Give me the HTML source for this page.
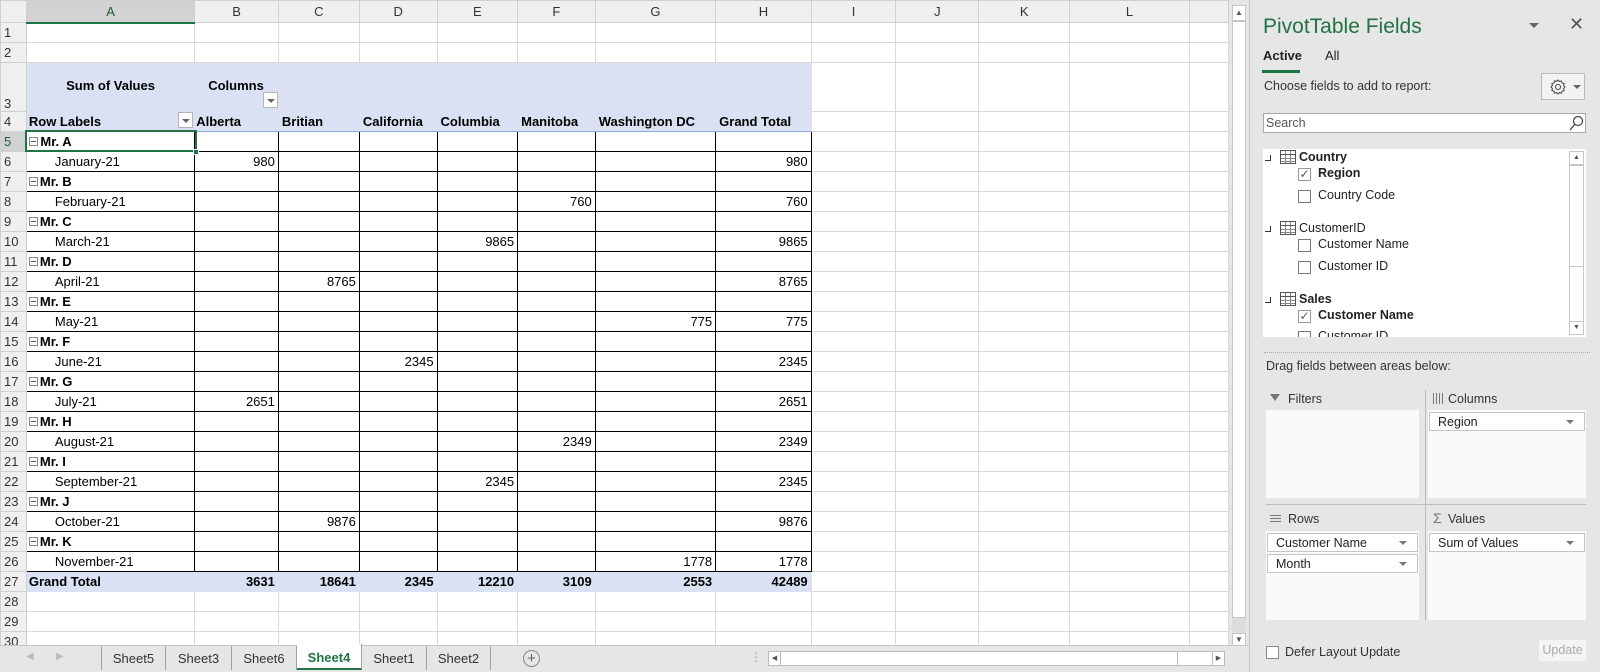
<!DOCTYPE html>
<html><head><meta charset="utf-8">
<style>
*{box-sizing:border-box;margin:0;padding:0}
body{width:1600px;height:672px;overflow:hidden;background:#e6e6e6;font-family:"Liberation Sans",sans-serif;font-size:13px;color:#000;position:relative}
#grid{position:absolute;left:0;top:0;width:1229px;height:645px;overflow:hidden;background:#fff}
table{border-collapse:collapse;table-layout:fixed;position:absolute;left:0;top:0}
td,th{height:20px;border:1px solid #d9d9d9;padding:0 3px;white-space:nowrap;overflow:hidden;font-weight:normal}
th{background:#efefef;color:#333;border-color:#cfcfcf;font-size:13px}
tr.hd th{height:22px;text-align:center;font-size:13px}
th.rn{text-align:left;padding-left:3px}
th.sel{background:#d2d2d2;border-bottom:2px solid #217346;color:#1e5e38}
th.selr{background:#d2d2d2;border-right:2px solid #217346;color:#1e5e38}
.bl{background:#d9e1f2;border-color:#d9e1f2}
.b{font-weight:bold}
.r4 td.bl{border-bottom:1px solid #8ea9db}
td.p{border:1px solid #000}
.gt td{background:#d9e1f2;border-color:#d9e1f2;border-top:1px solid #8ea9db;font-weight:bold;text-align:right}
.n{text-align:right}
.ind{padding-left:28px}
.m{display:inline-block;width:9px;height:9px;border:1px solid #8a8a8a;position:relative;margin:0 2px 0 0;vertical-align:0}
.m:after{content:"";position:absolute;left:1px;right:1px;top:3px;height:1px;background:#555}
.dd{position:absolute;width:15px;height:16px;border:1px solid #b5b5b5;background:#fff}
.dd:after{content:"";position:absolute;left:3px;top:6px;border:4px solid transparent;border-top:4px solid #666}
.abs{position:absolute}
.panel{position:absolute;left:1249px;top:0;width:351px;height:672px;background:#e6e6e6;border-left:1px solid #c8c8c8}
.cb{position:absolute;width:13px;height:13px;border:1px solid #777;background:#fff}
.fld{position:absolute;background:#fff;border:1px solid #c6c6c6;height:19px;font-size:12.5px;padding:2px 0 0 8px;color:#222}
.fld:after{content:"";position:absolute;right:10px;top:7px;border:4px solid transparent;border-top:4px solid #777}
.box{position:absolute;background:#fafafa}
.tab{position:absolute;top:646px;height:24px;font-size:13px;color:#333;text-align:center;padding-top:5px;border-right:1px solid #a0a0a0}
.ti{position:absolute;width:16px;height:14px;border:1px solid #555;background:
linear-gradient(#555,#555) 0 3px/100% 1px no-repeat,linear-gradient(#888,#888) 0 7px/100% 1px no-repeat,linear-gradient(#888,#888) 0 10px/100% 1px no-repeat,linear-gradient(#888,#888) 4px 0/1px 100% no-repeat,linear-gradient(#888,#888) 9px 0/1px 100% no-repeat,#fff}
.cn{position:absolute;width:6px;height:6px;border-right:1px solid #333;border-bottom:1px solid #333}
.pl{position:absolute;font-size:12.5px;color:#222}
.ck{position:absolute;color:#555;font-size:12px;line-height:13px;width:13px;text-align:center}
</style></head><body>
<div id="grid">
<table>
<colgroup><col style="width:26px"><col style="width:170px"><col style="width:84px"><col style="width:82px"><col style="width:78px"><col style="width:81px"><col style="width:78px"><col style="width:121px"><col style="width:96px"><col style="width:87px"><col style="width:85px"><col style="width:93px"><col style="width:123px"><col style="width:40px"></colgroup>
<tr class="hd"><th style="background:#efefef"></th><th class="sel">A</th><th>B</th><th>C</th><th>D</th><th>E</th><th>F</th><th>G</th><th>H</th><th>I</th><th>J</th><th>K</th><th>L</th><th></th></tr>
<tr><th class="rn">1</th><td></td><td></td><td></td><td></td><td></td><td></td><td></td><td></td><td></td><td></td><td></td><td></td><td></td></tr>
<tr><th class="rn">2</th><td></td><td></td><td></td><td></td><td></td><td></td><td></td><td></td><td></td><td></td><td></td><td></td><td></td></tr>
<tr><th class="rn" style="height:49px;vertical-align:bottom">3</th><td class="bl b" style="text-align:center;vertical-align:top;padding-top:15px">Sum of Values</td><td class="bl b" style="vertical-align:top;padding-top:15px;padding-left:13px">Columns</td><td class="bl"></td><td class="bl"></td><td class="bl"></td><td class="bl"></td><td class="bl"></td><td class="bl"></td><td></td><td></td><td></td><td></td><td></td></tr>
<tr class="r4"><th class="rn">4</th><td class="bl b" style="padding-left:2px">Row Labels</td><td class="bl b" style="padding-left:1px">Alberta</td><td class="bl b">Britian</td><td class="bl b">California</td><td class="bl b">Columbia</td><td class="bl b">Manitoba</td><td class="bl b">Washington DC</td><td class="bl b">Grand Total</td><td></td><td></td><td></td><td></td><td></td></tr>
<tr><th class="rn selr">5</th><td class="p b" style="padding-left:2px"><span class="m"></span>Mr. A</td><td class="p"></td><td class="p"></td><td class="p"></td><td class="p"></td><td class="p"></td><td class="p"></td><td class="p"></td><td></td><td></td><td></td><td></td><td></td></tr>
<tr><th class="rn">6</th><td class="p ind">January-21</td><td class="p n">980</td><td class="p"></td><td class="p"></td><td class="p"></td><td class="p"></td><td class="p"></td><td class="p n">980</td><td></td><td></td><td></td><td></td><td></td></tr>
<tr><th class="rn">7</th><td class="p b" style="padding-left:2px"><span class="m"></span>Mr. B</td><td class="p"></td><td class="p"></td><td class="p"></td><td class="p"></td><td class="p"></td><td class="p"></td><td class="p"></td><td></td><td></td><td></td><td></td><td></td></tr>
<tr><th class="rn">8</th><td class="p ind">February-21</td><td class="p"></td><td class="p"></td><td class="p"></td><td class="p"></td><td class="p n">760</td><td class="p"></td><td class="p n">760</td><td></td><td></td><td></td><td></td><td></td></tr>
<tr><th class="rn">9</th><td class="p b" style="padding-left:2px"><span class="m"></span>Mr. C</td><td class="p"></td><td class="p"></td><td class="p"></td><td class="p"></td><td class="p"></td><td class="p"></td><td class="p"></td><td></td><td></td><td></td><td></td><td></td></tr>
<tr><th class="rn">10</th><td class="p ind">March-21</td><td class="p"></td><td class="p"></td><td class="p"></td><td class="p n">9865</td><td class="p"></td><td class="p"></td><td class="p n">9865</td><td></td><td></td><td></td><td></td><td></td></tr>
<tr><th class="rn">11</th><td class="p b" style="padding-left:2px"><span class="m"></span>Mr. D</td><td class="p"></td><td class="p"></td><td class="p"></td><td class="p"></td><td class="p"></td><td class="p"></td><td class="p"></td><td></td><td></td><td></td><td></td><td></td></tr>
<tr><th class="rn">12</th><td class="p ind">April-21</td><td class="p"></td><td class="p n">8765</td><td class="p"></td><td class="p"></td><td class="p"></td><td class="p"></td><td class="p n">8765</td><td></td><td></td><td></td><td></td><td></td></tr>
<tr><th class="rn">13</th><td class="p b" style="padding-left:2px"><span class="m"></span>Mr. E</td><td class="p"></td><td class="p"></td><td class="p"></td><td class="p"></td><td class="p"></td><td class="p"></td><td class="p"></td><td></td><td></td><td></td><td></td><td></td></tr>
<tr><th class="rn">14</th><td class="p ind">May-21</td><td class="p"></td><td class="p"></td><td class="p"></td><td class="p"></td><td class="p"></td><td class="p n">775</td><td class="p n">775</td><td></td><td></td><td></td><td></td><td></td></tr>
<tr><th class="rn">15</th><td class="p b" style="padding-left:2px"><span class="m"></span>Mr. F</td><td class="p"></td><td class="p"></td><td class="p"></td><td class="p"></td><td class="p"></td><td class="p"></td><td class="p"></td><td></td><td></td><td></td><td></td><td></td></tr>
<tr><th class="rn">16</th><td class="p ind">June-21</td><td class="p"></td><td class="p"></td><td class="p n">2345</td><td class="p"></td><td class="p"></td><td class="p"></td><td class="p n">2345</td><td></td><td></td><td></td><td></td><td></td></tr>
<tr><th class="rn">17</th><td class="p b" style="padding-left:2px"><span class="m"></span>Mr. G</td><td class="p"></td><td class="p"></td><td class="p"></td><td class="p"></td><td class="p"></td><td class="p"></td><td class="p"></td><td></td><td></td><td></td><td></td><td></td></tr>
<tr><th class="rn">18</th><td class="p ind">July-21</td><td class="p n">2651</td><td class="p"></td><td class="p"></td><td class="p"></td><td class="p"></td><td class="p"></td><td class="p n">2651</td><td></td><td></td><td></td><td></td><td></td></tr>
<tr><th class="rn">19</th><td class="p b" style="padding-left:2px"><span class="m"></span>Mr. H</td><td class="p"></td><td class="p"></td><td class="p"></td><td class="p"></td><td class="p"></td><td class="p"></td><td class="p"></td><td></td><td></td><td></td><td></td><td></td></tr>
<tr><th class="rn">20</th><td class="p ind">August-21</td><td class="p"></td><td class="p"></td><td class="p"></td><td class="p"></td><td class="p n">2349</td><td class="p"></td><td class="p n">2349</td><td></td><td></td><td></td><td></td><td></td></tr>
<tr><th class="rn">21</th><td class="p b" style="padding-left:2px"><span class="m"></span>Mr. I</td><td class="p"></td><td class="p"></td><td class="p"></td><td class="p"></td><td class="p"></td><td class="p"></td><td class="p"></td><td></td><td></td><td></td><td></td><td></td></tr>
<tr><th class="rn">22</th><td class="p ind">September-21</td><td class="p"></td><td class="p"></td><td class="p"></td><td class="p n">2345</td><td class="p"></td><td class="p"></td><td class="p n">2345</td><td></td><td></td><td></td><td></td><td></td></tr>
<tr><th class="rn">23</th><td class="p b" style="padding-left:2px"><span class="m"></span>Mr. J</td><td class="p"></td><td class="p"></td><td class="p"></td><td class="p"></td><td class="p"></td><td class="p"></td><td class="p"></td><td></td><td></td><td></td><td></td><td></td></tr>
<tr><th class="rn">24</th><td class="p ind">October-21</td><td class="p"></td><td class="p n">9876</td><td class="p"></td><td class="p"></td><td class="p"></td><td class="p"></td><td class="p n">9876</td><td></td><td></td><td></td><td></td><td></td></tr>
<tr><th class="rn">25</th><td class="p b" style="padding-left:2px"><span class="m"></span>Mr. K</td><td class="p"></td><td class="p"></td><td class="p"></td><td class="p"></td><td class="p"></td><td class="p"></td><td class="p"></td><td></td><td></td><td></td><td></td><td></td></tr>
<tr><th class="rn">26</th><td class="p ind">November-21</td><td class="p"></td><td class="p"></td><td class="p"></td><td class="p"></td><td class="p"></td><td class="p n">1778</td><td class="p n">1778</td><td></td><td></td><td></td><td></td><td></td></tr>
<tr class="gt"><th class="rn">27</th><td style="text-align:left;padding-left:2px">Grand Total</td><td>3631</td><td>18641</td><td>2345</td><td>12210</td><td>3109</td><td>2553</td><td>42489</td><td style="background:#fff;border-color:#d9d9d9"></td><td style="background:#fff;border-color:#d9d9d9"></td><td style="background:#fff;border-color:#d9d9d9"></td><td style="background:#fff;border-color:#d9d9d9"></td><td style="background:#fff;border-color:#d9d9d9"></td></tr>
<tr><th class="rn">28</th><td></td><td></td><td></td><td></td><td></td><td></td><td></td><td></td><td></td><td></td><td></td><td></td><td></td></tr>
<tr><th class="rn">29</th><td></td><td></td><td></td><td></td><td></td><td></td><td></td><td></td><td></td><td></td><td></td><td></td><td></td></tr>
<tr><th class="rn">30</th><td></td><td></td><td></td><td></td><td></td><td></td><td></td><td></td><td></td><td></td><td></td><td></td><td></td></tr>
</table>
<div class="dd" style="left:263px;top:92px"></div>
<div class="dd" style="left:178px;top:112px"></div>
<div class="abs" style="left:25px;top:130px;width:172px;height:22px;border:2px solid #217346"></div>
<div class="abs" style="left:193px;top:149px;width:6px;height:6px;background:#217346;border:1px solid #fff"></div>
</div>
<div class="abs" style="left:1229px;top:0;width:20px;height:645px;background:#e6e6e6"></div>
<div class="abs" style="left:1232px;top:5px;width:14px;height:636px;background:#fff;border:1px solid #c6c6c6"></div>
<div class="abs" style="left:1232px;top:5px;width:14px;height:16px;border:1px solid #c6c6c6;background:#fff;font-size:8px;color:#555;text-align:center;line-height:14px">▲</div>
<div class="abs" style="left:1232px;top:21px;width:14px;height:597px;border:1px solid #c6c6c6;background:#fff"></div>
<div class="abs" style="left:1232px;top:618px;width:14px;height:20px;background:#ddd"></div>
<div class="abs" style="left:1232px;top:633px;width:14px;height:14px;border:1px solid #c6c6c6;background:#fff;font-size:8px;color:#555;text-align:center;line-height:12px">▼</div>
<div class="abs" style="left:0;top:645px;width:1249px;height:27px;background:#e6e6e6;border-top:1px solid #c6c6c6"></div>
<div class="abs" style="left:26px;top:651px;font-size:10px;color:#bbb">◀</div>
<div class="abs" style="left:56px;top:651px;font-size:10px;color:#bbb">▶</div>
<div class="tab" style="left:101px;width:65px;border-left:1px solid #a0a0a0">Sheet5</div>
<div class="tab" style="left:166px;width:66px">Sheet3</div>
<div class="tab" style="left:232px;width:65px">Sheet6</div>
<div class="tab" style="left:297px;top:644px;height:26px;width:65px;background:#fff;color:#217346;font-weight:bold;border-bottom:2px solid #217346;padding-top:6px">Sheet4</div>
<div class="tab" style="left:362px;width:65px">Sheet1</div>
<div class="tab" style="left:427px;width:64px">Sheet2</div>
<div class="abs" style="left:523px;top:650px;width:17px;height:17px;border:1px solid #888;border-radius:50%;text-align:center;line-height:15px;color:#666;font-size:15px">+</div>
<div class="abs" style="left:750px;top:650px;color:#999;font-size:12px">⋮</div>
<div class="abs" style="left:768px;top:651px;width:457px;height:15px;border:1px solid #bbb;background:#fff"></div>
<div class="abs" style="left:768px;top:651px;width:13px;height:15px;border:1px solid #bbb;font-size:7px;color:#555;line-height:13px;text-align:center">◀</div>
<div class="abs" style="left:781px;top:652px;width:397px;height:13px;background:#fff;border-right:1px solid #bbb"></div>
<div class="abs" style="left:1212px;top:651px;width:13px;height:15px;border:1px solid #bbb;font-size:7px;color:#555;line-height:13px;text-align:center">▶</div>
<div class="panel">
<div class="abs" style="left:13px;top:15px;font-size:21px;color:#217346">PivotTable Fields</div>
<div class="abs" style="left:279px;top:23px;border:5px solid transparent;border-top:5px solid #666"></div>
<div class="abs" style="left:319px;top:14px;font-size:18px;color:#555">✕</div>
<div class="abs" style="left:13px;top:48px;font-weight:bold;font-size:13px;color:#222">Active</div>
<div class="abs" style="left:75px;top:48px;font-size:13px;color:#222">All</div>
<div class="abs" style="left:12px;top:70px;width:38px;height:3px;background:#217346"></div>
<div class="abs" style="left:14px;top:79px;font-size:12.5px;color:#333">Choose fields to add to report:</div>
<div class="abs" style="left:291px;top:73px;width:44px;height:27px;border:1px solid #bbb;background:#f2f2f2"></div>
<svg class="abs" style="left:299px;top:78px" width="18" height="18" viewBox="0 0 18 18"><path d="M9 2l1.5 1.5 2-.5.6 2 2 .6-.5 2L16 9l-1.4 1.5.5 2-2 .6-.6 2-2-.5L9 16l-1.5-1.4-2 .5-.6-2-2-.6.5-2L2 9l1.4-1.5-.5-2 2-.6.6-2 2 .5z" fill="none" stroke="#444"/><circle cx="9" cy="9" r="2.5" fill="none" stroke="#444"/></svg>
<div class="abs" style="left:323px;top:85px;border:4px solid transparent;border-top:4px solid #666"></div>
<div class="abs" style="left:13px;top:113px;width:323px;height:20px;background:#fff;border:1px solid #aaa;font-size:12.5px;color:#555;padding:2px 2px">Search</div>
<svg class="abs" style="left:318px;top:115px" width="16" height="16"><circle cx="10" cy="6" r="4.5" fill="none" stroke="#444" stroke-width="1.2"/><path d="M7 9L2 15" stroke="#444" stroke-width="1.3"/></svg>
<div class="abs" style="left:13px;top:149px;width:323px;height:188px;background:#fff;overflow:hidden">
 <div class="cn" style="left:2px;top:6px"></div><div class="ti" style="left:17px;top:1px"></div><div class="pl b" style="left:36px;top:1px">Country</div>
 <div class="cb" style="left:35px;top:19px;border-color:#999"></div><div class="ck" style="left:35px;top:19px">✓</div><div class="pl b" style="left:55px;top:17px">Region</div>
 <div class="cb" style="left:35px;top:41px"></div><div class="pl" style="left:55px;top:39px">Country Code</div>
 <div class="cn" style="left:2px;top:77px"></div><div class="ti" style="left:17px;top:72px"></div><div class="pl" style="left:36px;top:72px">CustomerID</div>
 <div class="cb" style="left:35px;top:90px"></div><div class="pl" style="left:55px;top:88px">Customer Name</div>
 <div class="cb" style="left:35px;top:112px"></div><div class="pl" style="left:55px;top:110px">Customer ID</div>
 <div class="cn" style="left:2px;top:148px"></div><div class="ti" style="left:17px;top:143px"></div><div class="pl b" style="left:36px;top:143px">Sales</div>
 <div class="cb" style="left:35px;top:161px;border-color:#999"></div><div class="ck" style="left:35px;top:161px">✓</div><div class="pl b" style="left:55px;top:159px">Customer Name</div>
 <div class="cb" style="left:35px;top:182px"></div><div class="pl" style="left:55px;top:180px">Customer ID</div>
 <div class="abs" style="left:306px;top:2px;width:15px;height:184px;border:1px solid #c6c6c6;background:#fff"></div>
 <div class="abs" style="left:306px;top:2px;width:15px;height:14px;border:1px solid #c6c6c6;font-size:7px;color:#555;text-align:center;line-height:12px">▲</div>
 <div class="abs" style="left:306px;top:16px;width:15px;height:102px;border:1px solid #c6c6c6"></div>
 <div class="abs" style="left:306px;top:172px;width:15px;height:14px;border:1px solid #c6c6c6;font-size:7px;color:#555;text-align:center;line-height:12px">▼</div>
</div>
<div class="abs" style="left:14px;top:352px;width:326px;border-top:1px dotted #aaa"></div>
<div class="abs" style="left:16px;top:359px;font-size:12.5px;color:#333">Drag fields between areas below:</div>
<div class="abs" style="left:175px;top:390px;width:1px;height:230px;background:#bbb"></div>
<div class="abs" style="left:16px;top:504px;width:320px;height:1px;background:#bbb"></div>
<div class="abs" style="left:20px;top:394px;border:5px solid transparent;border-top:7px solid #777;width:0"></div>
<div class="pl" style="left:38px;top:392px;color:#333">Filters</div>
<div class="abs" style="left:183px;top:393px;width:10px;height:11px;background:repeating-linear-gradient(90deg,#777 0 1px,transparent 1px 3px)"></div>
<div class="pl" style="left:198px;top:392px;color:#333">Columns</div>
<div class="abs" style="left:20px;top:515px;width:11px;height:9px;background:repeating-linear-gradient(#777 0 1px,transparent 1px 3px)"></div>
<div class="pl" style="left:38px;top:512px;color:#333">Rows</div>
<div class="pl" style="left:183px;top:510px;color:#777;font-size:14px">Σ</div>
<div class="pl" style="left:198px;top:512px;color:#333">Values</div>
<div class="box" style="left:16px;top:410px;width:153px;height:88px"></div>
<div class="box" style="left:178px;top:410px;width:158px;height:88px"></div>
<div class="box" style="left:16px;top:531px;width:153px;height:89px"></div>
<div class="box" style="left:178px;top:531px;width:158px;height:89px"></div>
<div class="fld" style="left:179px;top:412px;width:156px">Region</div>
<div class="fld" style="left:17px;top:533px;width:151px">Customer Name</div>
<div class="fld" style="left:17px;top:554px;width:151px">Month</div>
<div class="fld" style="left:179px;top:533px;width:156px">Sum of Values</div>
<div class="cb" style="left:16px;top:646px;width:13px;height:13px;border-color:#888"></div>
<div class="pl" style="left:35px;top:645px;color:#333">Defer Layout Update</div>
<div class="abs" style="left:289px;top:640px;width:47px;height:21px;background:#f4f4f4;color:#aaa;font-size:12.5px;text-align:center;padding-top:3px">Update</div>
</div>
</body></html>
